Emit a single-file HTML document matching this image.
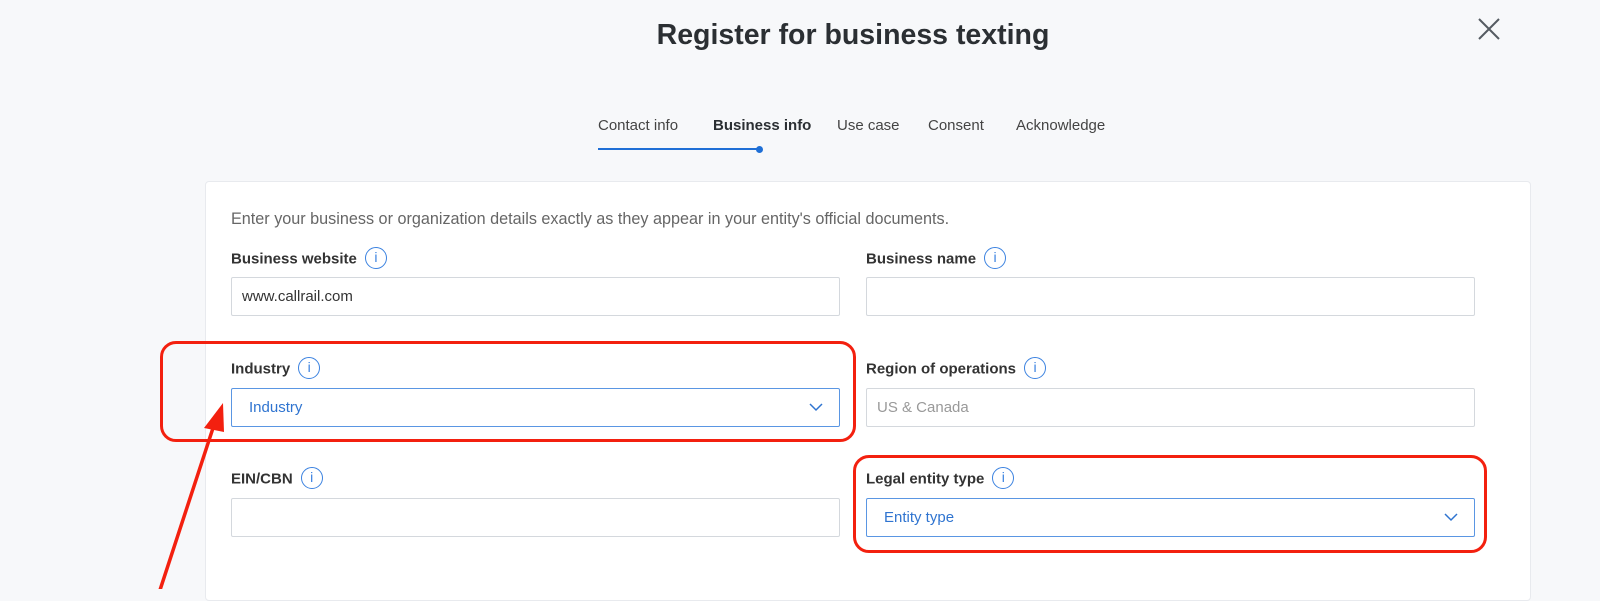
<!DOCTYPE html>
<html><head><meta charset="utf-8"><style>
*{box-sizing:border-box;margin:0;padding:0}
body{width:1600px;height:589px;background:#f7f8fa;font-family:"Liberation Sans",sans-serif;position:relative;overflow:hidden;color:#333}
.a{position:absolute}
h1{position:absolute;left:0;width:1706px;top:19px;text-align:center;font-size:28.5px;font-weight:bold;color:#2b2f33}
.tab{position:absolute;top:117px;font-size:15px;color:#444}
.card{position:absolute;left:205px;top:181px;width:1326px;height:420px;background:#fff;border:1px solid #e8eaee;border-radius:4px}
.lbl{position:absolute;font-size:15px;font-weight:bold;color:#333}
.info{display:inline-block;width:22px;height:22px;border:1.5px solid #3b82e0;border-radius:50%;color:#3b82e0;font-size:14px;font-weight:normal;text-align:center;line-height:19px;vertical-align:middle;margin-left:8px;margin-top:-3px}
.inp{position:absolute;height:39px;border:1px solid #d4d8dd;border-radius:2px;background:#fff;font-size:15px;padding-left:10px;line-height:37px;color:#333}
.sel{border-color:#5a96e3;color:#2f74d0;padding-left:17px}
.chev{position:absolute;right:16px;top:13px}
.red{position:absolute;border:3px solid #f3200f;border-radius:16px}
</style></head><body>
<h1>Register for business texting</h1>
<svg class="a" style="left:1477px;top:17px" width="24" height="24" viewBox="0 0 24 24"><path d="M2 2L22 22M22 2L2 22" stroke="#555b62" stroke-width="2"/></svg>
<div class="tab" style="left:598px">Contact info</div>
<div class="tab" style="left:713px;font-weight:bold;color:#2b2f33">Business info</div>
<div class="tab" style="left:837px">Use case</div>
<div class="tab" style="left:928px">Consent</div>
<div class="tab" style="left:1016px">Acknowledge</div>
<div class="a" style="left:598px;top:148px;width:162px;height:2px;background:#1f6fd6"></div>
<div class="a" style="left:756px;top:146px;width:7px;height:7px;border-radius:50%;background:#1f6fd6"></div>
<div class="card"></div>
<div class="a" style="left:231px;top:210px;font-size:16.2px;color:#666">Enter your business or organization details exactly as they appear in your entity's official documents.</div>
<div class="lbl" style="left:231px;top:250px">Business website<span class="info">i</span></div>
<div class="lbl" style="left:866px;top:250px">Business name<span class="info">i</span></div>
<div class="inp" style="left:231px;top:277px;width:609px">www.callrail.com</div>
<div class="inp" style="left:866px;top:277px;width:609px"></div>
<div class="lbl" style="left:231px;top:360px">Industry<span class="info">i</span></div>
<div class="lbl" style="left:866px;top:360px">Region of operations<span class="info">i</span></div>
<div class="inp sel" style="left:231px;top:388px;width:609px">Industry<svg class="chev" width="14" height="10" viewBox="0 0 14 10"><path d="M1 2L7 8L13 2" fill="none" stroke="#2f74d0" stroke-width="1.5"/></svg></div>
<div class="inp" style="left:866px;top:388px;width:609px;color:#999">US &amp; Canada</div>
<div class="lbl" style="left:231px;top:470px">EIN/CBN<span class="info">i</span></div>
<div class="lbl" style="left:866px;top:470px">Legal entity type<span class="info">i</span></div>
<div class="inp" style="left:231px;top:498px;width:609px"></div>
<div class="inp sel" style="left:866px;top:498px;width:609px">Entity type<svg class="chev" width="14" height="10" viewBox="0 0 14 10"><path d="M1 2L7 8L13 2" fill="none" stroke="#2f74d0" stroke-width="1.5"/></svg></div>
<div class="red" style="left:160px;top:341px;width:696px;height:101px"></div>
<div class="red" style="left:853px;top:455px;width:634px;height:98px"></div>
<svg class="a" style="left:0;top:0" width="1600" height="589"><path d="M160 590L214 425" stroke="#f3200f" stroke-width="3.5"/><path d="M223 403L204 428L224 432Z" fill="#f3200f"/></svg>
</body></html>
